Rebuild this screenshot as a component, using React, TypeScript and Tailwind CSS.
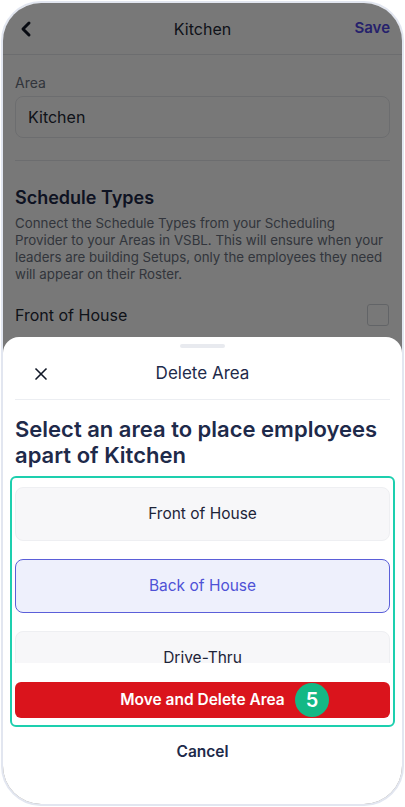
import { ChevronLeft, X } from 'lucide-react'

const OPTIONS = [
  { label: 'Front of House', selected: false },
  { label: 'Back of House', selected: true },
  { label: 'Drive-Thru', selected: false },
]

export default function App() {
  return (
    <div className="w-[405px] h-[807px] bg-white p-px" style={{ fontFamily: 'Inter, "Noto Sans", sans-serif' }}>
      <div className="relative h-full overflow-hidden rounded-[40px] border-2 border-[#e2e6f0] bg-white">
        {/* Page behind the sheet */}
        <div className="relative flex h-[52px] items-center justify-between border-b border-[#e5e7eb] pl-[11px] pr-[12px]">
          <ChevronLeft size={24} strokeWidth={3} className="text-[#111827]" />
          <span className="absolute inset-x-0 text-center text-[16px] text-[#1f2937]">Kitchen</span>
          <span className="relative text-[15px] font-semibold text-[#4f46e5]">Save</span>
        </div>

        <div className="px-[12px]">
          <div className="mt-[17px] text-[14px] text-[#6b7280]">Area</div>
          <div className="mt-[3px] flex h-[42px] items-center rounded-[8px] border border-[#e5e7eb] px-[12px] text-[16px] text-[#1f2937]">
            Kitchen
          </div>
          <div className="mt-[22px] h-px bg-[#e5e7eb]" />

          <h2 className="mt-[23px] text-[18px] font-semibold text-[#1e2a4a]">Schedule Types</h2>
          <p className="mt-[4px] text-[13.3px] leading-[17px] text-[#6b7280]">
            Connect the Schedule Types from your Scheduling Provider to your Areas in VSBL. This will ensure when your leaders are building Setups, only the employees they need will appear on their Roster.
          </p>
          <div className="mt-[20px] flex items-center justify-between pr-px">
            <span className="text-[16px] text-[#1f2937]">Front of House</span>
            <div className="h-[22px] w-[22px] rounded-[3px] border border-[#d1d5db] bg-white" />
          </div>
        </div>

        {/* Dim overlay */}
        <div className="absolute inset-0 bg-black/[0.53]" />

        {/* Bottom sheet */}
        <div className="absolute inset-x-0 bottom-0 top-[334px] rounded-t-[16px] bg-white px-[12px]">
          <div className="mx-auto mt-[7px] h-[4px] w-[45px] rounded-full bg-[#e8eaef]" />
          <div className="relative flex h-[51px] items-center justify-center">
            <X size={20} strokeWidth={2} className="absolute left-[16px] text-[#111827]" />
            <span className="text-[17px] text-[#1e2a4a]">Delete Area</span>
          </div>
          <div className="h-px bg-[#eceef2]" />

          <h1 className="mt-[16px] text-[22px] font-semibold leading-[26px] text-[#1e2a4a]">
            Select an area to place employees apart of Kitchen
          </h1>

          <div className="relative mt-[19px]">
            <div className="pointer-events-none absolute -inset-x-[5px] -top-[11px] -bottom-[9px] rounded-[6px] border-2 border-[#1dcfae]" />
            <div className="flex h-[176px] flex-col gap-[18px] overflow-hidden">
              {OPTIONS.map(o => (
                <div
                  key={o.label}
                  className={
                    o.selected
                      ? 'flex h-[54px] shrink-0 items-center justify-center rounded-[8px] border border-[#5b5fd9] bg-[#eef0fc] text-[15.5px] text-[#4f52d6]'
                      : 'flex h-[54px] shrink-0 items-center justify-center rounded-[8px] border border-[#eeeff2] bg-[#f7f7f9] text-[15.5px] text-[#1e2438]'
                  }
                >
                  {o.label}
                </div>
              ))}
            </div>
            <div className="relative mt-[19px] flex h-[36px] items-center justify-center rounded-[6px] bg-[#da141c]">
              <span className="text-[15.5px] font-semibold text-white">Move and Delete Area</span>
              <span className="absolute left-[280px] top-[1px] flex h-[34px] w-[34px] items-center justify-center rounded-full bg-[#14b885] text-[20px] font-semibold text-white">
                5
              </span>
            </div>
          </div>

          <div className="mt-[22px] text-center text-[15.5px] font-semibold text-[#1e2a4a]">Cancel</div>
        </div>
      </div>
    </div>
  )
}
